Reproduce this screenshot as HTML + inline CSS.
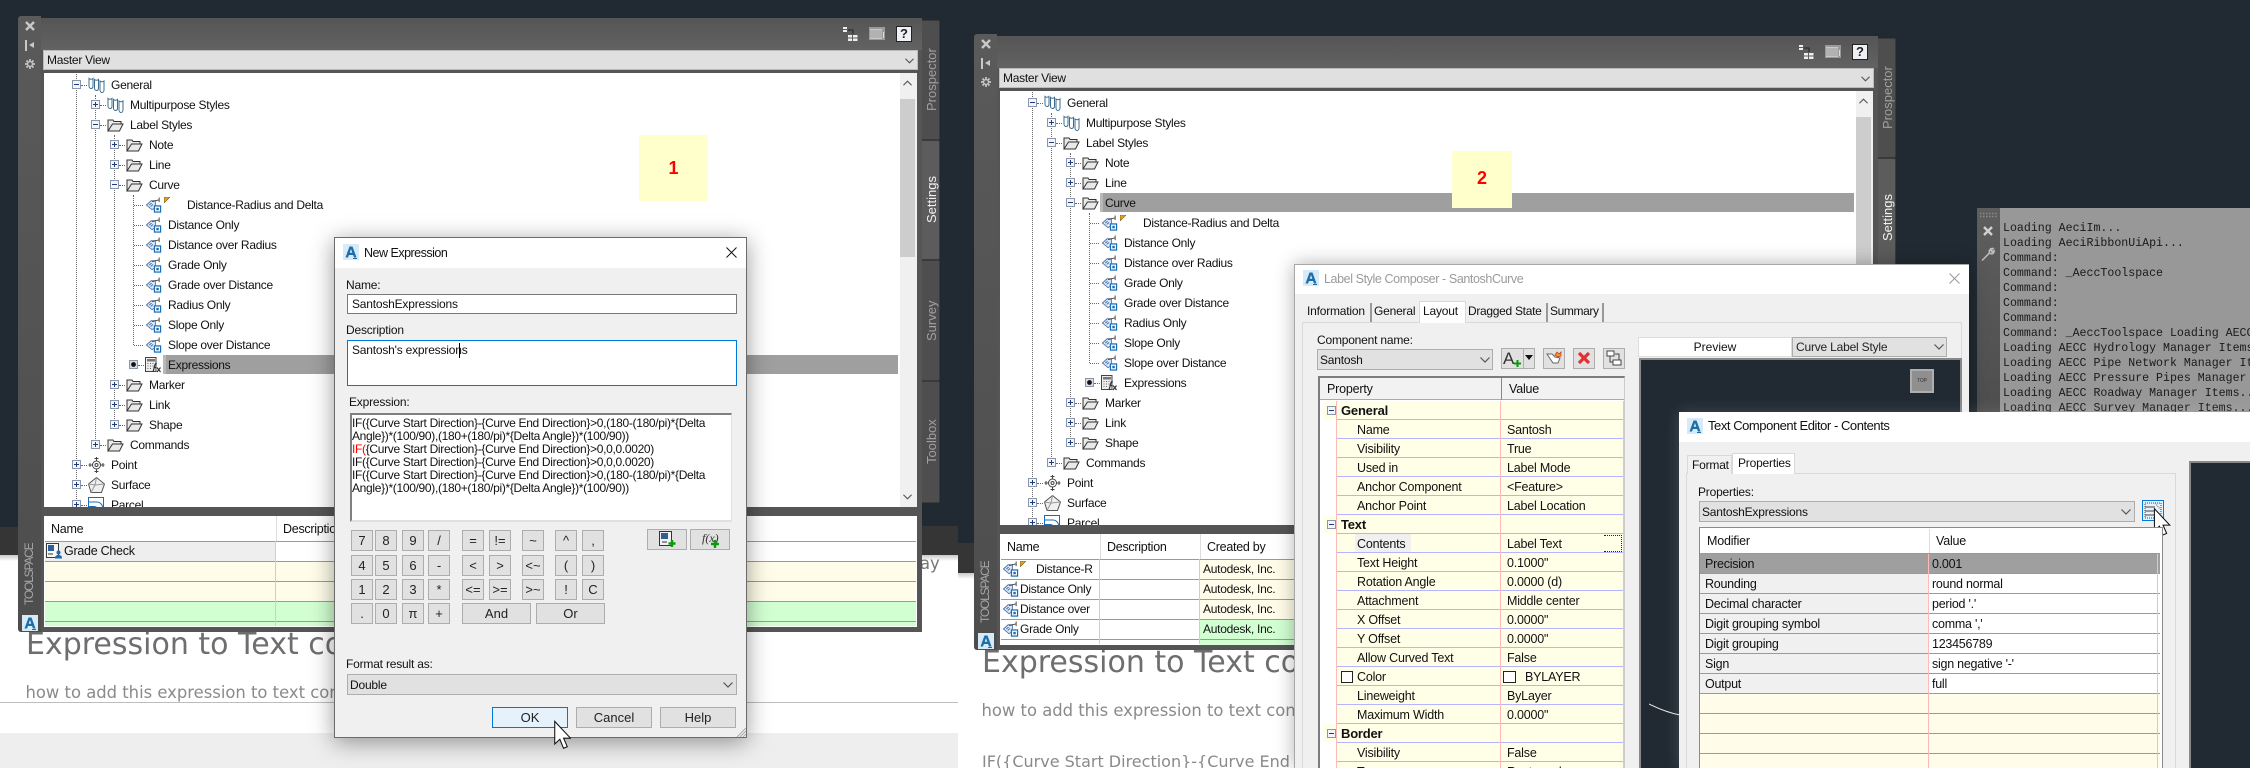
<!DOCTYPE html>
<html><head><meta charset="utf-8"><title>Expression to Text Component</title>
<style>
html,body{margin:0;padding:0;width:2250px;height:768px;overflow:hidden;background:#212a33}
body{position:relative;font-family:"Liberation Sans",sans-serif;font-size:12px;color:#111}
div,svg,span,p,b,i{position:absolute;margin:0;display:block}
p,.l{white-space:nowrap;letter-spacing:-.27px;line-height:16px}
.win{left:0;top:0;width:950px;height:640px}
.tree{left:0;top:0;width:917px;height:507px;overflow:hidden}
.r{left:0;height:0;width:0}
.r p{top:-8px}
.x{top:-5px;width:9px;height:9px}
.h{top:0;width:6px;height:0;border-top:1px dotted #666}
.f{top:-8px;width:17px;height:16px}
.vd{width:0;border-left:1px dotted #666}
.vt{writing-mode:vertical-rl;transform:rotate(180deg);text-align:center;white-space:nowrap;color:#a0a0a0;left:923px;width:18px;line-height:18px;font-size:13px}
.tab{left:920px;width:20px;background:#4e4e4e;border:1px solid #3a3a3a;border-left:0;border-radius:0 2px 2px 0;box-sizing:border-box}
.btn{background:#e1e1e1;border:1px solid #adadad;box-sizing:border-box;text-align:center;font-size:13px;color:#222;line-height:19px}
.lbl{white-space:nowrap;line-height:16px;letter-spacing:-.2px}
.ex{left:352px;white-space:nowrap;line-height:13px;letter-spacing:-.32px;font-size:12px}
.pr{height:18px;width:287px;left:1337px;border-bottom:1px solid #b4b4ff;line-height:18px;letter-spacing:-.2px;font-size:12.5px}
.pr span{white-space:nowrap;top:1px}
.k{left:20px}.v{left:170px}
.pr b{left:4px;top:1px;font-size:13px;letter-spacing:-.2px}
.gb{left:1327px;width:9px;height:9px}
.mr{left:1700px;width:460px;height:19px;border-bottom:1px solid #8c9db3;line-height:19px;letter-spacing:-.25px;font-size:12.5px;background:#fff}
.mr .a{left:0;top:0;width:228px;height:19px;background:#f0f0f0}
.mr span{white-space:nowrap;top:1px}
.cmd{left:2003px;font-family:"Liberation Mono",monospace;font-size:11.6px;line-height:15px;color:#1a1a1a;white-space:nowrap;margin-top:1px}
.hd{font-family:"DejaVu Sans",sans-serif;font-size:30px;line-height:44px;color:#6e6e6e;white-space:nowrap}
.sb{font-family:"DejaVu Sans",sans-serif;font-size:16.4px;line-height:22px;color:#8a8a8a;white-space:nowrap}
</style></head>
<body>
<svg width="0" height="0" style="left:0;top:0">
<defs>
<symbol id="pl" viewBox="0 0 9 9"><rect x=".5" y=".5" width="8" height="8" fill="#f3f5fa" stroke="#8b95a8"/><path d="M2 4.5H7M4.5 2V7" stroke="#1d3c7d" fill="none"/></symbol>
<symbol id="mi" viewBox="0 0 9 9"><rect x=".5" y=".5" width="8" height="8" fill="#f3f5fa" stroke="#8b95a8"/><path d="M2 4.5H7" stroke="#1d3c7d" fill="none"/></symbol>
<symbol id="dot" viewBox="0 0 9 9"><rect x=".5" y=".5" width="8" height="8" fill="#d8dde8" stroke="#8b95a8"/><circle cx="4.5" cy="4.5" r="2.4" fill="#111"/></symbol>
<symbol id="fo" viewBox="0 0 17 16"><path d="M1 14V3H6L7 4.5H14V7H5.5L1 14H12.5L16 7H5.5" fill="#e9e9e9" stroke="#333" stroke-width="1"/></symbol>
<symbol id="gen" viewBox="0 0 17 16"><g fill="#fff" stroke="#3b6c8f" stroke-width="1"><path d="M1 1.500c1 1 3 1 4 0V9c0 2-1 2.500-2 2.500S1 10.500 1 9z"/><path d="M6.500 2.500c1 1 3 1 4 0V11c0 2-1 2.500-2 2.500s-2-1-2-2.500z"/><path d="M12 4c1 1 3 1 4 0v9c0 1.500-1 2.500-2 2.500s-2-1-2-2.500z"/></g></symbol>
<symbol id="st" viewBox="0 0 17 17"><path d="M1 8.500 6 4H10.500V11L7 13.500z" fill="#dfe9f7" stroke="#56759f"/><path d="M4 8.500 6.500 6.500M5.500 10 8 8" stroke="#2e73c0"/><path d="M7 5 14.500 3M14.500 .5V5.500" stroke="#444" fill="none"/><rect x="9.500" y="9.500" width="6.500" height="6.500" fill="#fff" stroke="#1a6bb5" stroke-width="1.300"/><rect x="11.500" y="11.500" width="2.600" height="2.600" fill="#1a6bb5"/></symbol>
<symbol id="exi" viewBox="0 0 17 16"><rect x=".5" y=".5" width="10.500" height="14" fill="#eee" stroke="#444"/><rect x="2" y="2" width="8" height="2.500" fill="#777"/><path d="M2.500 6.500h1m1.500 0h1m1.500 0h1M2.500 9h1m1.500 0h1m1.500 0h1M2.500 11.500h1m1.500 0h1" stroke="#666"/><path d="M8 15 10 7.500c.3-1 1-1 1.800-.8M8.500 10.500H11.500M12 10.500l3.500 4.500M15.500 10.500 12 15" stroke="#333" stroke-width="1.200" fill="none"/></symbol>
<symbol id="pt" viewBox="0 0 17 16"><circle cx="8.500" cy="8" r="4" fill="#fff" stroke="#444"/><circle cx="8.500" cy="8" r="1.500" fill="none" stroke="#444"/><path d="M8.500 0V4M8.500 12V16M.5 8H4.500M12.500 8H16.500" stroke="#444"/><path d="M6.500 1.500h4M6.500 14.500h4M2 6v4M15 6v4" stroke="#444"/></symbol>
<symbol id="su" viewBox="0 0 17 16"><path d="M8.500 .5 16.500 7 13.500 15.500H3L.5 7z" fill="#efefef" stroke="#555"/><path d="M8.500 .5 7 8 .5 7M7 8 3 15.500M7 8 16.500 7" stroke="#999" fill="none"/></symbol>
<symbol id="pa" viewBox="0 0 17 16"><rect x=".5" y=".5" width="15" height="15" fill="#fff" stroke="#1a6bb5"/><path d="M.5 5H9C13 5 15.500 9 15.500 15.500M.5 9.500H6C9 9.500 11 12 11 15.500" stroke="#1a6bb5" fill="none"/></symbol>
<symbol id="A" viewBox="0 0 16 16"><rect width="16" height="16" fill="#d6ebf7"/><path fill-rule="evenodd" fill="#1d6ea8" d="M2.500 13.500 6.500 2.500H9.500L13.500 13.500H11L10.100 11H5.900L5 13.500ZM6.700 8.800H9.300L8 5Z"/><rect x="10" y="14" width="4" height="1" fill="#1d6ea8"/></symbol>
<symbol id="cv" viewBox="0 0 10 6"><path d="M.5 .5 5 5 9.500 .5" fill="none" stroke="#555" stroke-width="1.200"/></symbol>
<symbol id="cur" viewBox="0 0 16 27"><path d="M.7 .7V22L5.500 17.500 9 26 12.500 24.500 9 16.500H15.500Z" fill="#fff" stroke="#111" stroke-width="1"/></symbol>
<symbol id="gr" viewBox="0 0 10 10"><path d="M5 0V3M5 7V10M0 5H3M7 5H10M1.500 1.500 3 3M8.500 1.500 7 3M1.500 8.500 3 7M8.500 8.500 7 7" stroke="#c8c8c8" stroke-width="1.700"/><circle cx="5" cy="5" r="2.400" fill="none" stroke="#c8c8c8" stroke-width="1.200"/></symbol>
</defs>
</svg>

<!-- backdrop pages -->
<div style="left:0;top:527px;width:18px;height:28px;background:#353535"></div>
<div style="left:922px;top:526px;width:36px;height:29px;background:#353535"></div>
<div style="left:0;top:555px;width:958px;height:147px;background:#fff"></div>
<div style="left:0;top:555px;width:958px;height:6px;background:linear-gradient(#c8c8c8,#fff)"></div>
<div style="left:0;top:702px;width:958px;height:1px;background:#bdbdbd"></div>
<div style="left:0;top:703px;width:958px;height:30px;background:#fff"></div>
<div style="left:0;top:733px;width:958px;height:35px;background:#eee"></div>
<div style="left:26px;top:632px;height:70px;width:310px;overflow:hidden"><span class="hd" style="left:0;top:-9.400px">Expression to Text co</span></div>
<div style="left:25.500px;top:684px;width:312px;height:18px;overflow:hidden"><span class="sb" style="left:0;top:-1.700px">how to add this expression to text con</span></div>
<div class="sb" style="left:920px;top:553px;color:#777">ay</div>

<div style="left:958px;top:543px;width:17px;height:30px;background:#353535"></div>
<div style="left:958px;top:573px;width:340px;height:195px;background:#fff"></div>
<div style="left:958px;top:573px;width:340px;height:6px;background:linear-gradient(#c8c8c8,#fff)"></div>
<div style="left:982px;top:650px;height:70px;width:312px;overflow:hidden"><span class="hd" style="left:0;top:-9.400px">Expression to Text co</span></div>
<div class="sb" style="left:981.500px;top:700.300px">how to add this expression to text con</div>
<div class="sb" style="left:982px;top:750.500px;font-size:16px">IF({Curve Start Direction}-{Curve End</div>

<!-- WINDOW 1 -->
<div class="win">
 <div class="tab" style="top:20px;height:120px"></div>
 <div class="tab" style="top:140px;height:120px;background:#5c5c5c"></div>
 <div class="tab" style="top:260px;height:121px"></div>
 <div class="tab" style="top:381px;height:122px"></div>
 <div class="vt" style="top:20px;height:120px">Prospector</div>
 <div class="vt" style="top:140px;height:120px;color:#f2f2f2">Settings</div>
 <div class="vt" style="top:260px;height:121px">Survey</div>
 <div class="vt" style="top:381px;height:122px">Toolbox</div>
 <div style="left:18px;top:16px;width:23px;height:616px;background:linear-gradient(#5a5a5a,#4d4d4d);border-radius:3px 0 0 3px"></div>
 <div style="left:41px;top:18px;width:881px;height:614px;background:#555;border-radius:3px 3px 0 0"></div>
 <div style="left:41px;top:18px;width:881px;height:32px;background:linear-gradient(#555,#626262)"></div>
 <svg style="left:25px;top:21px;width:10px;height:10px" viewBox="0 0 10 10"><path d="M1 1 9 9M9 1 1 9" stroke="#c8c8c8" stroke-width="2.400"/></svg>
 <svg style="left:25px;top:40px;width:10px;height:11px" viewBox="0 0 10 11"><path d="M1 0V11" stroke="#c8c8c8" stroke-width="2"/><path d="M9 2V8L4 5Z" fill="#c8c8c8"/></svg>
 <svg style="left:25px;top:59px;width:10px;height:10px"><use href="#gr"/></svg>
 <div class="vt" style="left:20px;top:543px;height:62px;font-size:12px;letter-spacing:-1.200px;color:#a6a6a6">TOOLSPACE</div>
 <svg style="left:22px;top:615px;width:16px;height:16px"><use href="#A"/></svg>
 <svg style="left:842px;top:26px;width:16px;height:16px" viewBox="0 0 16 16"><rect x="1" y="1" width="4" height="2" fill="#eee"/><rect x="1" y="4" width="4" height="2" fill="#eee"/><path d="M6 4H11V8" stroke="#222" fill="none"/><rect x="6" y="9" width="4" height="2.500" fill="#eee"/><rect x="6" y="12.500" width="4" height="2.500" fill="#eee"/><rect x="11" y="9" width="4.500" height="2.500" fill="#eee"/><rect x="11" y="12.500" width="4.500" height="2.500" fill="#eee"/></svg>
 <svg style="left:869px;top:27px;width:16px;height:13px" viewBox="0 0 16 13"><rect width="16" height="13" fill="#9a9a9a"/><rect x="1" y="2" width="12" height="10" fill="#c8c8c8"/><path d="M1 4H13M1 6H13M1 8H13M1 10H13" stroke="#9c9c9c"/><rect x="14" y="5" width="1" height="6" fill="#ddd"/></svg>
 <div style="left:896px;top:26px;width:16px;height:16px;background:#eef0f5;border:1px solid #222;box-sizing:border-box;text-align:center;font-weight:bold;font-size:13px;line-height:14px;color:#222">?</div>
 <div style="left:43px;top:50px;width:875px;height:20px;background:#e0e0e0;border:1px solid #bbb;box-sizing:border-box"></div>
 <div class="l" style="left:47px;top:52px">Master View</div>
 <svg style="left:905px;top:58px;width:9px;height:6px"><use href="#cv"/></svg>
 <div style="left:44px;top:73px;width:873px;height:434px;background:#fff"></div>
 <div style="left:900px;top:73px;width:17px;height:434px;background:#f0f0f0"></div>
 <svg style="left:903px;top:80px;width:9px;height:6px;transform:rotate(180deg)"><use href="#cv"/></svg>
 <svg style="left:903px;top:494px;width:9px;height:6px"><use href="#cv"/></svg>
 <div style="left:900px;top:99px;width:15px;height:158px;background:#cdcdcd"></div>
 <div style="left:639px;top:135px;width:69px;height:66px;background:#ffc"></div>
 <div style="left:639px;top:155px;width:69px;text-align:center;font-size:18px;font-weight:bold;color:#f00;line-height:26px">1</div>
 <div style="left:163px;top:355px;width:735px;height:19px;background:#9f9f9f;border-left:3px solid #b8b8b8;box-sizing:border-box"></div>
 <div class="tree">
  <div class="vd" style="left:76px;top:74px;height:435px"></div>
  <div class="vd" style="left:95px;top:95px;height:350px"></div>
  <div class="vd" style="left:114px;top:135px;height:290px"></div>
  <div class="vd" style="left:133px;top:195px;height:150px"></div>
  <div class="r" style="top:85px"><svg class="x" style="left:72px"><use href="#mi"/></svg><i class="h" style="left:81px"></i><svg class="f" style="left:88px"><use href="#gen"/></svg><p style="left:111px">General</p></div>
  <div class="r" style="top:105px"><svg class="x" style="left:91px"><use href="#pl"/></svg><i class="h" style="left:100px"></i><svg class="f" style="left:107px"><use href="#gen"/></svg><p style="left:130px">Multipurpose Styles</p></div>
  <div class="r" style="top:125px"><svg class="x" style="left:91px"><use href="#mi"/></svg><i class="h" style="left:100px"></i><svg class="f" style="left:107px"><use href="#fo"/></svg><p style="left:130px">Label Styles</p></div>
  <div class="r" style="top:145px"><svg class="x" style="left:110px"><use href="#pl"/></svg><i class="h" style="left:119px"></i><svg class="f" style="left:126px"><use href="#fo"/></svg><p style="left:149px">Note</p></div>
  <div class="r" style="top:165px"><svg class="x" style="left:110px"><use href="#pl"/></svg><i class="h" style="left:119px"></i><svg class="f" style="left:126px"><use href="#fo"/></svg><p style="left:149px">Line</p></div>
  <div class="r" style="top:185px"><svg class="x" style="left:110px"><use href="#mi"/></svg><i class="h" style="left:119px"></i><svg class="f" style="left:126px"><use href="#fo"/></svg><p style="left:149px">Curve</p></div>
  <div class="r" style="top:205px"><i class="h" style="left:134px;width:9px"></i><svg class="f" style="left:145px"><use href="#st"/></svg><svg style="left:164px;top:-8px;width:6px;height:6px" viewBox="0 0 6 6"><path d="M0 0H6L0 6Z" fill="#e3a21a" stroke="#6b4d10" stroke-width=".6"/></svg><p style="left:187px">Distance-Radius and Delta</p></div>
  <div class="r" style="top:225px"><i class="h" style="left:134px;width:9px"></i><svg class="f" style="left:145px"><use href="#st"/></svg><p style="left:168px">Distance Only</p></div>
  <div class="r" style="top:245px"><i class="h" style="left:134px;width:9px"></i><svg class="f" style="left:145px"><use href="#st"/></svg><p style="left:168px">Distance over Radius</p></div>
  <div class="r" style="top:265px"><i class="h" style="left:134px;width:9px"></i><svg class="f" style="left:145px"><use href="#st"/></svg><p style="left:168px">Grade Only</p></div>
  <div class="r" style="top:285px"><i class="h" style="left:134px;width:9px"></i><svg class="f" style="left:145px"><use href="#st"/></svg><p style="left:168px">Grade over Distance</p></div>
  <div class="r" style="top:305px"><i class="h" style="left:134px;width:9px"></i><svg class="f" style="left:145px"><use href="#st"/></svg><p style="left:168px">Radius Only</p></div>
  <div class="r" style="top:325px"><i class="h" style="left:134px;width:9px"></i><svg class="f" style="left:145px"><use href="#st"/></svg><p style="left:168px">Slope Only</p></div>
  <div class="r" style="top:345px"><i class="h" style="left:134px;width:9px"></i><svg class="f" style="left:145px"><use href="#st"/></svg><p style="left:168px">Slope over Distance</p></div>
  <div class="r" style="top:365px"><svg class="x" style="left:129px"><use href="#dot"/></svg><i class="h" style="left:138px"></i><svg class="f" style="left:145px"><use href="#exi"/></svg><p style="left:168px">Expressions</p></div>
  <div class="r" style="top:385px"><svg class="x" style="left:110px"><use href="#pl"/></svg><i class="h" style="left:119px"></i><svg class="f" style="left:126px"><use href="#fo"/></svg><p style="left:149px">Marker</p></div>
  <div class="r" style="top:405px"><svg class="x" style="left:110px"><use href="#pl"/></svg><i class="h" style="left:119px"></i><svg class="f" style="left:126px"><use href="#fo"/></svg><p style="left:149px">Link</p></div>
  <div class="r" style="top:425px"><svg class="x" style="left:110px"><use href="#pl"/></svg><i class="h" style="left:119px"></i><svg class="f" style="left:126px"><use href="#fo"/></svg><p style="left:149px">Shape</p></div>
  <div class="r" style="top:445px"><svg class="x" style="left:91px"><use href="#pl"/></svg><i class="h" style="left:100px"></i><svg class="f" style="left:107px"><use href="#fo"/></svg><p style="left:130px">Commands</p></div>
  <div class="r" style="top:465px"><svg class="x" style="left:72px"><use href="#pl"/></svg><i class="h" style="left:81px"></i><svg class="f" style="left:88px"><use href="#pt"/></svg><p style="left:111px">Point</p></div>
  <div class="r" style="top:485px"><svg class="x" style="left:72px"><use href="#pl"/></svg><i class="h" style="left:81px"></i><svg class="f" style="left:88px"><use href="#su"/></svg><p style="left:111px">Surface</p></div>
  <div class="r" style="top:505px"><svg class="x" style="left:72px"><use href="#pl"/></svg><i class="h" style="left:81px"></i><svg class="f" style="left:88px"><use href="#pa"/></svg><p style="left:111px">Parcel</p></div>
 </div>
 <!-- list -->
 <div style="left:44px;top:516px;width:873px;height:111px;background:#fff"></div>
 <div style="left:276px;top:516px;width:1px;height:25px;background:#ddd"></div>
 <div class="l" style="left:51px;top:521px;font-size:12.500px">Name</div>
 <div class="l" style="left:283px;top:521px;font-size:12.500px">Description</div>
 <div style="left:45px;top:541px;width:871px;height:1px;background:#8c9db3"></div>
 <div style="left:45px;top:542px;width:230px;height:19px;background:#eee"></div>
 <div style="left:45px;top:561px;width:871px;height:1px;background:#8c9db3"></div>
 <div style="left:45px;top:562px;width:871px;height:19px;background:#fffde9"></div>
 <div style="left:45px;top:581px;width:871px;height:1px;background:#8c9db3"></div>
 <div style="left:45px;top:582px;width:871px;height:19px;background:#fffde9"></div>
 <div style="left:45px;top:601px;width:871px;height:1px;background:#8c9db3"></div>
 <div style="left:45px;top:602px;width:871px;height:19px;background:#d2ffd2"></div>
 <div style="left:45px;top:621px;width:871px;height:1px;background:#8c9db3"></div>
 <div style="left:45px;top:622px;width:871px;height:4px;background:#d2ffd2"></div>
 <div style="left:275px;top:541px;width:1px;height:85px;background:#ffb9b9"></div>
 <svg style="left:46px;top:543px;width:16px;height:16px" viewBox="0 0 16 16"><rect x=".5" y=".5" width="12" height="14" fill="#f6f6f6" stroke="#3a3a3a"/><rect x="2" y="2" width="6" height="6" fill="#2a5f9e"/><path d="M2 11H7" stroke="#333"/><path d="M9 15.500C9 13 10 12 12.500 12S16 13 16 15.500Z" fill="#1a6bb5"/><circle cx="12.500" cy="9.500" r="2" fill="#1a6bb5"/></svg>
 <div class="l" style="left:64px;top:543px;font-size:12.500px">Grade Check</div>
</div>

<!-- WINDOW 2 -->
<div class="win" style="left:956px;top:18px">
 <div class="tab" style="top:20px;height:120px"></div>
 <div class="tab" style="top:140px;height:120px;background:#5c5c5c"></div>
 <div class="tab" style="top:260px;height:121px"></div>
 <div class="tab" style="top:381px;height:122px"></div>
 <div class="vt" style="top:20px;height:120px">Prospector</div>
 <div class="vt" style="top:140px;height:120px;color:#f2f2f2">Settings</div>
 <div class="vt" style="top:260px;height:121px">Survey</div>
 <div class="vt" style="top:381px;height:122px">Toolbox</div>
 <div style="left:18px;top:16px;width:23px;height:616px;background:linear-gradient(#5a5a5a,#4d4d4d);border-radius:3px 0 0 3px"></div>
 <div style="left:41px;top:18px;width:881px;height:614px;background:#555;border-radius:3px 3px 0 0"></div>
 <div style="left:41px;top:18px;width:881px;height:32px;background:linear-gradient(#555,#626262)"></div>
 <svg style="left:25px;top:21px;width:10px;height:10px" viewBox="0 0 10 10"><path d="M1 1 9 9M9 1 1 9" stroke="#c8c8c8" stroke-width="2.400"/></svg>
 <svg style="left:25px;top:40px;width:10px;height:11px" viewBox="0 0 10 11"><path d="M1 0V11" stroke="#c8c8c8" stroke-width="2"/><path d="M9 2V8L4 5Z" fill="#c8c8c8"/></svg>
 <svg style="left:25px;top:59px;width:10px;height:10px"><use href="#gr"/></svg>
 <div class="vt" style="left:20px;top:543px;height:62px;font-size:12px;letter-spacing:-1.200px;color:#a6a6a6">TOOLSPACE</div>
 <svg style="left:22px;top:615px;width:16px;height:16px"><use href="#A"/></svg>
 <svg style="left:842px;top:26px;width:16px;height:16px" viewBox="0 0 16 16"><rect x="1" y="1" width="4" height="2" fill="#eee"/><rect x="1" y="4" width="4" height="2" fill="#eee"/><path d="M6 4H11V8" stroke="#222" fill="none"/><rect x="6" y="9" width="4" height="2.500" fill="#eee"/><rect x="6" y="12.500" width="4" height="2.500" fill="#eee"/><rect x="11" y="9" width="4.500" height="2.500" fill="#eee"/><rect x="11" y="12.500" width="4.500" height="2.500" fill="#eee"/></svg>
 <svg style="left:869px;top:27px;width:16px;height:13px" viewBox="0 0 16 13"><rect width="16" height="13" fill="#9a9a9a"/><rect x="1" y="2" width="12" height="10" fill="#c8c8c8"/><path d="M1 4H13M1 6H13M1 8H13M1 10H13" stroke="#9c9c9c"/><rect x="14" y="5" width="1" height="6" fill="#ddd"/></svg>
 <div style="left:896px;top:26px;width:16px;height:16px;background:#eef0f5;border:1px solid #222;box-sizing:border-box;text-align:center;font-weight:bold;font-size:13px;line-height:14px;color:#222">?</div>
 <div style="left:43px;top:50px;width:875px;height:20px;background:#e0e0e0;border:1px solid #bbb;box-sizing:border-box"></div>
 <div class="l" style="left:47px;top:52px">Master View</div>
 <svg style="left:905px;top:58px;width:9px;height:6px"><use href="#cv"/></svg>
 <div style="left:44px;top:73px;width:873px;height:434px;background:#fff"></div>
 <div style="left:900px;top:73px;width:17px;height:434px;background:#f0f0f0"></div>
 <svg style="left:903px;top:80px;width:9px;height:6px;transform:rotate(180deg)"><use href="#cv"/></svg>
 <div style="left:900px;top:99px;width:15px;height:158px;background:#cdcdcd"></div>
 <div style="left:144px;top:175px;width:754px;height:19px;background:#9f9f9f;border-left:3px solid #b8b8b8;box-sizing:border-box"></div>
 <div style="left:496px;top:133px;width:60px;height:57px;background:#ffc"></div>
 <div style="left:496px;top:147px;width:60px;text-align:center;font-size:18px;font-weight:bold;color:#f00;line-height:26px">2</div>
 <div class="tree">
  <div class="vd" style="left:76px;top:74px;height:435px"></div>
  <div class="vd" style="left:95px;top:95px;height:350px"></div>
  <div class="vd" style="left:114px;top:135px;height:290px"></div>
  <div class="vd" style="left:133px;top:195px;height:150px"></div>
  <div class="r" style="top:85px"><svg class="x" style="left:72px"><use href="#mi"/></svg><i class="h" style="left:81px"></i><svg class="f" style="left:88px"><use href="#gen"/></svg><p style="left:111px">General</p></div>
  <div class="r" style="top:105px"><svg class="x" style="left:91px"><use href="#pl"/></svg><i class="h" style="left:100px"></i><svg class="f" style="left:107px"><use href="#gen"/></svg><p style="left:130px">Multipurpose Styles</p></div>
  <div class="r" style="top:125px"><svg class="x" style="left:91px"><use href="#mi"/></svg><i class="h" style="left:100px"></i><svg class="f" style="left:107px"><use href="#fo"/></svg><p style="left:130px">Label Styles</p></div>
  <div class="r" style="top:145px"><svg class="x" style="left:110px"><use href="#pl"/></svg><i class="h" style="left:119px"></i><svg class="f" style="left:126px"><use href="#fo"/></svg><p style="left:149px">Note</p></div>
  <div class="r" style="top:165px"><svg class="x" style="left:110px"><use href="#pl"/></svg><i class="h" style="left:119px"></i><svg class="f" style="left:126px"><use href="#fo"/></svg><p style="left:149px">Line</p></div>
  <div class="r" style="top:185px"><svg class="x" style="left:110px"><use href="#mi"/></svg><i class="h" style="left:119px"></i><svg class="f" style="left:126px"><use href="#fo"/></svg><p style="left:149px">Curve</p></div>
  <div class="r" style="top:205px"><i class="h" style="left:134px;width:9px"></i><svg class="f" style="left:145px"><use href="#st"/></svg><svg style="left:164px;top:-8px;width:6px;height:6px" viewBox="0 0 6 6"><path d="M0 0H6L0 6Z" fill="#e3a21a" stroke="#6b4d10" stroke-width=".6"/></svg><p style="left:187px">Distance-Radius and Delta</p></div>
  <div class="r" style="top:225px"><i class="h" style="left:134px;width:9px"></i><svg class="f" style="left:145px"><use href="#st"/></svg><p style="left:168px">Distance Only</p></div>
  <div class="r" style="top:245px"><i class="h" style="left:134px;width:9px"></i><svg class="f" style="left:145px"><use href="#st"/></svg><p style="left:168px">Distance over Radius</p></div>
  <div class="r" style="top:265px"><i class="h" style="left:134px;width:9px"></i><svg class="f" style="left:145px"><use href="#st"/></svg><p style="left:168px">Grade Only</p></div>
  <div class="r" style="top:285px"><i class="h" style="left:134px;width:9px"></i><svg class="f" style="left:145px"><use href="#st"/></svg><p style="left:168px">Grade over Distance</p></div>
  <div class="r" style="top:305px"><i class="h" style="left:134px;width:9px"></i><svg class="f" style="left:145px"><use href="#st"/></svg><p style="left:168px">Radius Only</p></div>
  <div class="r" style="top:325px"><i class="h" style="left:134px;width:9px"></i><svg class="f" style="left:145px"><use href="#st"/></svg><p style="left:168px">Slope Only</p></div>
  <div class="r" style="top:345px"><i class="h" style="left:134px;width:9px"></i><svg class="f" style="left:145px"><use href="#st"/></svg><p style="left:168px">Slope over Distance</p></div>
  <div class="r" style="top:365px"><svg class="x" style="left:129px"><use href="#dot"/></svg><i class="h" style="left:138px"></i><svg class="f" style="left:145px"><use href="#exi"/></svg><p style="left:168px">Expressions</p></div>
  <div class="r" style="top:385px"><svg class="x" style="left:110px"><use href="#pl"/></svg><i class="h" style="left:119px"></i><svg class="f" style="left:126px"><use href="#fo"/></svg><p style="left:149px">Marker</p></div>
  <div class="r" style="top:405px"><svg class="x" style="left:110px"><use href="#pl"/></svg><i class="h" style="left:119px"></i><svg class="f" style="left:126px"><use href="#fo"/></svg><p style="left:149px">Link</p></div>
  <div class="r" style="top:425px"><svg class="x" style="left:110px"><use href="#pl"/></svg><i class="h" style="left:119px"></i><svg class="f" style="left:126px"><use href="#fo"/></svg><p style="left:149px">Shape</p></div>
  <div class="r" style="top:445px"><svg class="x" style="left:91px"><use href="#pl"/></svg><i class="h" style="left:100px"></i><svg class="f" style="left:107px"><use href="#fo"/></svg><p style="left:130px">Commands</p></div>
  <div class="r" style="top:465px"><svg class="x" style="left:72px"><use href="#pl"/></svg><i class="h" style="left:81px"></i><svg class="f" style="left:88px"><use href="#pt"/></svg><p style="left:111px">Point</p></div>
  <div class="r" style="top:485px"><svg class="x" style="left:72px"><use href="#pl"/></svg><i class="h" style="left:81px"></i><svg class="f" style="left:88px"><use href="#su"/></svg><p style="left:111px">Surface</p></div>
  <div class="r" style="top:505px"><svg class="x" style="left:72px"><use href="#pl"/></svg><i class="h" style="left:81px"></i><svg class="f" style="left:88px"><use href="#pa"/></svg><p style="left:111px">Parcel</p></div>
 </div>
 <!-- list -->
 <div style="left:44px;top:516px;width:873px;height:111px;background:#fff"></div>
 <div style="left:144px;top:516px;width:1px;height:25px;background:#ddd"></div>
 <div style="left:244px;top:516px;width:1px;height:25px;background:#ddd"></div>
 <div class="l" style="left:51px;top:521px;font-size:12.500px">Name</div>
 <div class="l" style="left:151px;top:521px;font-size:12.500px">Description</div>
 <div class="l" style="left:251px;top:521px;font-size:12.500px">Created by</div>
 <div style="left:244px;top:541px;width:673px;height:60px;background:#fffde9"></div>
 <div style="left:244px;top:601px;width:673px;height:26px;background:#d2ffd2"></div>
 <div style="left:45px;top:541px;width:871px;height:1px;background:#8c9db3"></div>
 <div style="left:45px;top:561px;width:871px;height:1px;background:#8c9db3"></div>
 <div style="left:45px;top:581px;width:871px;height:1px;background:#8c9db3"></div>
 <div style="left:45px;top:601px;width:871px;height:1px;background:#8c9db3"></div>
 <div style="left:45px;top:621px;width:871px;height:1px;background:#8c9db3"></div>
 <div style="left:143px;top:541px;width:1px;height:85px;background:#ffb9b9"></div>
 <div style="left:243px;top:541px;width:1px;height:85px;background:#ffb9b9"></div>
 <svg class="f" style="left:46px;top:543px"><use href="#st"/></svg>
 <svg style="left:64px;top:543px;width:6px;height:6px" viewBox="0 0 6 6"><path d="M0 0H6L0 6Z" fill="#e3a21a" stroke="#6b4d10" stroke-width=".6"/></svg>
 <div class="l" style="left:80px;top:543px">Distance-R</div>
 <svg class="f" style="left:46px;top:563px"><use href="#st"/></svg><div class="l" style="left:64px;top:563px">Distance Only</div>
 <svg class="f" style="left:46px;top:583px"><use href="#st"/></svg><div class="l" style="left:64px;top:583px">Distance over</div>
 <svg class="f" style="left:46px;top:603px"><use href="#st"/></svg><div class="l" style="left:64px;top:603px">Grade Only</div>
 <div class="l" style="left:247px;top:543px">Autodesk, Inc.</div>
 <div class="l" style="left:247px;top:563px">Autodesk, Inc.</div>
 <div class="l" style="left:247px;top:583px">Autodesk, Inc.</div>
 <div class="l" style="left:247px;top:603px">Autodesk, Inc.</div>
</div>

<!-- NEW EXPRESSION DIALOG -->
<div style="left:334px;top:237px;width:413px;height:501px;background:#f0f0f0;border:1px solid #6b6b6b;box-sizing:border-box;box-shadow:0 4px 22px rgba(0,0,0,.4)"></div>
<div style="left:335px;top:238px;width:411px;height:30px;background:#fff"></div>
<svg style="left:343px;top:244px;width:16px;height:16px"><use href="#A"/></svg>
<div class="lbl" style="left:364px;top:245px;font-size:12.500px;letter-spacing:-.5px">New Expression</div>
<svg style="left:726px;top:247px;width:11px;height:11px" viewBox="0 0 11 11"><path d="M.5 .5 10.500 10.500M10.500 .5 .5 10.500" stroke="#111"/></svg>
<div class="lbl" style="left:346px;top:277px">Name:</div>
<div style="left:347px;top:294px;width:390px;height:20px;background:#fff;border:1px solid #7a7a7a;box-sizing:border-box"></div>
<div class="lbl" style="left:352px;top:296px">SantoshExpressions</div>
<div class="lbl" style="left:346px;top:322px">Description</div>
<div style="left:347px;top:340px;width:390px;height:46px;background:#fff;border:1px solid #0078d7;box-sizing:border-box"></div>
<div class="lbl" style="left:352px;top:342px">Santosh's expressions</div>
<div style="left:459px;top:343px;width:1px;height:15px;background:#000"></div>
<div class="lbl" style="left:349px;top:394px">Expression:</div>
<div style="left:350px;top:413px;width:382px;height:109px;background:#fff;border:2px solid #808080;border-right:1px solid #e0e0e0;border-bottom:2px solid #e0e0e0;box-sizing:border-box"></div>
<div class="ex" style="top:417px">IF({Curve Start Direction}-{Curve End Direction}&gt;0,(180-(180/pi)*{Delta</div>
<div class="ex" style="top:430px">Angle})*(100/90),(180+(180/pi)*{Delta Angle})*(100/90))</div>
<div class="ex" style="top:443px"><span style="position:static;display:inline;color:#f00">IF(</span>{Curve Start Direction}-{Curve End Direction}&gt;0,0,0.0020)</div>
<div class="ex" style="top:456px">IF({Curve Start Direction}-{Curve End Direction}&gt;0,0,0.0020)</div>
<div class="ex" style="top:469px">IF({Curve Start Direction}-{Curve End Direction}&gt;0,(180-(180/pi)*{Delta</div>
<div class="ex" style="top:482px">Angle})*(100/90),(180+(180/pi)*{Delta Angle})*(100/90))</div>

<div class="btn" style="left:351px;top:530px;width:22px;height:21px">7</div>
<div class="btn" style="left:375px;top:530px;width:22px;height:21px">8</div>
<div class="btn" style="left:402px;top:530px;width:22px;height:21px">9</div>
<div class="btn" style="left:428px;top:530px;width:22px;height:21px">/</div>
<div class="btn" style="left:462px;top:530px;width:22px;height:21px">=</div>
<div class="btn" style="left:489px;top:530px;width:22px;height:21px">!=</div>
<div class="btn" style="left:522px;top:530px;width:22px;height:21px">~</div>
<div class="btn" style="left:555px;top:530px;width:22px;height:21px">^</div>
<div class="btn" style="left:582px;top:530px;width:22px;height:21px">,</div>
<div class="btn" style="left:351px;top:555px;width:22px;height:21px">4</div>
<div class="btn" style="left:375px;top:555px;width:22px;height:21px">5</div>
<div class="btn" style="left:402px;top:555px;width:22px;height:21px">6</div>
<div class="btn" style="left:428px;top:555px;width:22px;height:21px">-</div>
<div class="btn" style="left:462px;top:555px;width:22px;height:21px">&lt;</div>
<div class="btn" style="left:489px;top:555px;width:22px;height:21px">&gt;</div>
<div class="btn" style="left:522px;top:555px;width:22px;height:21px">&lt;~</div>
<div class="btn" style="left:555px;top:555px;width:22px;height:21px">(</div>
<div class="btn" style="left:582px;top:555px;width:22px;height:21px">)</div>
<div class="btn" style="left:351px;top:579px;width:22px;height:21px">1</div>
<div class="btn" style="left:375px;top:579px;width:22px;height:21px">2</div>
<div class="btn" style="left:402px;top:579px;width:22px;height:21px">3</div>
<div class="btn" style="left:428px;top:579px;width:22px;height:21px">*</div>
<div class="btn" style="left:462px;top:579px;width:22px;height:21px">&lt;=</div>
<div class="btn" style="left:489px;top:579px;width:22px;height:21px">&gt;=</div>
<div class="btn" style="left:522px;top:579px;width:22px;height:21px">&gt;~</div>
<div class="btn" style="left:555px;top:579px;width:22px;height:21px">!</div>
<div class="btn" style="left:582px;top:579px;width:22px;height:21px">C</div>
<div class="btn" style="left:351px;top:603px;width:22px;height:21px">.</div>
<div class="btn" style="left:375px;top:603px;width:22px;height:21px">0</div>
<div class="btn" style="left:402px;top:603px;width:22px;height:21px">π</div>
<div class="btn" style="left:428px;top:603px;width:22px;height:21px">+</div>
<div class="btn" style="left:462px;top:603px;width:69px;height:21px">And</div>
<div class="btn" style="left:536px;top:603px;width:69px;height:21px">Or</div>
<div class="btn" style="left:647px;top:529px;width:40px;height:21px"></div>
<svg style="left:659px;top:531px;width:17px;height:16px" viewBox="0 0 17 16"><rect x=".5" y=".5" width="12" height="14" fill="#f2f2f2" stroke="#333"/><rect x="2" y="2" width="7" height="6" fill="#2f5f96"/><path d="M3 11H8" stroke="#333"/><path d="M13 9V16M9.500 12.500H16.500" stroke="#0a9a0a" stroke-width="2.400"/></svg>
<div class="btn" style="left:690px;top:529px;width:40px;height:21px"></div>
<div style="left:702px;top:529px;font:italic 12px/18px 'Liberation Serif',serif;color:#333">f(x)</div>
<svg style="left:711px;top:540px;width:8px;height:8px" viewBox="0 0 8 8"><path d="M4 0V8M0 4H8" stroke="#0a9a0a" stroke-width="2.400"/></svg>

<div class="lbl" style="left:346px;top:656px">Format result as:</div>
<div class="btn" style="left:347px;top:674px;width:390px;height:21px"></div>
<div class="lbl" style="left:350px;top:677px">Double</div>
<svg style="left:723px;top:682px;width:10px;height:6px"><use href="#cv"/></svg>
<div class="btn" style="left:492px;top:707px;width:76px;height:21px;background:#e5f1fb;border-color:#0078d7">OK</div>
<div class="btn" style="left:576px;top:707px;width:76px;height:21px">Cancel</div>
<div class="btn" style="left:660px;top:707px;width:76px;height:21px">Help</div>
<svg style="left:736px;top:727px;width:10px;height:10px" viewBox="0 0 10 10"><path d="M10 1 1 10M10 4 4 10M10 7 7 10" stroke="#aaa"/></svg>
<svg style="left:554px;top:720px;width:17px;height:30px"><use href="#cur"/></svg>

<!-- COMMAND WINDOW -->
<div style="left:1977px;top:208px;width:23px;height:204px;background:linear-gradient(#5e5e5e,#4e4e4e)"></div>
<div style="left:2000px;top:208px;width:250px;height:204px;background:#989898;overflow:hidden"></div>
<svg style="left:1980px;top:212px;width:17px;height:6px" viewBox="0 0 17 6"><path d="M0 1.500H17M0 4.500H17" stroke="#8a8a8a" stroke-dasharray="1.500 1.500" stroke-width="1.500"/></svg>
<svg style="left:1983px;top:226px;width:10px;height:10px" viewBox="0 0 10 10"><path d="M1 1 9 9M9 1 1 9" stroke="#d0d0d0" stroke-width="2.400"/></svg>
<svg style="left:1981px;top:247px;width:14px;height:14px" viewBox="0 0 14 14"><path d="M1 13.500 8.500 6M8.500 6C7.500 3.500 9.500 1 12 1.500L10 3.500 11 5 13 3.500C13.500 6 11 8 8.500 6" stroke="#bdbdbd" stroke-width="1.500" fill="none"/></svg>
<div class="cmd" style="top:220px">Loading AeciIm...</div>
<div class="cmd" style="top:235px">Loading AeciRibbonUiApi...</div>
<div class="cmd" style="top:250px">Command:</div>
<div class="cmd" style="top:265px">Command: _AeccToolspace</div>
<div class="cmd" style="top:280px">Command:</div>
<div class="cmd" style="top:295px">Command:</div>
<div class="cmd" style="top:310px">Command:</div>
<div class="cmd" style="top:325px">Command: _AeccToolspace Loading AECC Base...</div>
<div class="cmd" style="top:340px">Loading AECC Hydrology Manager Items...</div>
<div class="cmd" style="top:355px">Loading AECC Pipe Network Manager Items...</div>
<div class="cmd" style="top:370px">Loading AECC Pressure Pipes Manager Items...</div>
<div class="cmd" style="top:385px">Loading AECC Roadway Manager Items...</div>
<div class="cmd" style="top:400px">Loading AECC Survey Manager Items...</div>

<!-- LABEL STYLE COMPOSER -->
<div style="left:1294px;top:264px;width:675px;height:504px;background:#f0f0f0;box-shadow:0 0 18px rgba(0,0,0,.3);border-left:1px solid #a8a8a8;border-top:1px solid #a8a8a8;box-sizing:border-box"></div>
<div style="left:1295px;top:265px;width:674px;height:29px;background:#fff"></div>
<svg style="left:1303px;top:270px;width:16px;height:16px"><use href="#A"/></svg>
<div class="lbl" style="left:1324px;top:271px;font-size:12.500px;letter-spacing:-.4px;color:#9a9a9a">Label Style Composer - SantoshCurve</div>
<svg style="left:1949px;top:273px;width:11px;height:11px" viewBox="0 0 11 11"><path d="M.5 .5 10.500 10.500M10.500 .5 .5 10.500" stroke="#999"/></svg>
<div style="left:1302px;top:322px;width:660px;height:446px;background:#f0f0f0;border:1px solid #d9d9d9;border-bottom:0;box-sizing:border-box"></div>
<div style="left:1304px;top:303px;width:66px;height:19px;background:#efefef;border-right:2px solid #999"></div>
<div style="left:1372px;top:303px;width:45px;height:19px;background:#efefef"></div>
<div style="left:1419px;top:301px;width:47px;height:22px;background:#fff;border:1px solid #d9d9d9;border-bottom:0;box-sizing:border-box"></div>
<div style="left:1467px;top:303px;width:79px;height:19px;background:#efefef;border-right:2px solid #999"></div>
<div style="left:1548px;top:303px;width:54px;height:19px;background:#efefef;border-right:2px solid #999"></div>
<div class="lbl" style="left:1307px;top:303px">Information</div>
<div class="lbl" style="left:1374px;top:303px">General</div>
<div class="lbl" style="left:1423px;top:303px">Layout</div>
<div class="lbl" style="left:1468px;top:303px;letter-spacing:-.3px">Dragged State</div>
<div class="lbl" style="left:1550px;top:303px;letter-spacing:-.4px">Summary</div>
<div class="lbl" style="left:1317px;top:332px">Component name:</div>
<div class="btn" style="left:1317px;top:349px;width:176px;height:21px"></div>
<div class="lbl" style="left:1320px;top:352px">Santosh</div>
<svg style="left:1480px;top:357px;width:10px;height:6px"><use href="#cv"/></svg>
<div class="btn" style="left:1501px;top:348px;width:34px;height:21px"></div>
<div style="left:1523px;top:349px;width:1px;height:19px;background:#adadad"></div>
<div style="left:1503px;top:348px;font-size:17px;line-height:21px;color:#333">A</div>
<svg style="left:1514px;top:360px;width:7px;height:7px" viewBox="0 0 7 7"><path d="M3.500 0V7M0 3.500H7" stroke="#0a9a0a" stroke-width="2"/></svg>
<svg style="left:1525px;top:355px;width:8px;height:5px" viewBox="0 0 8 5"><path d="M0 0H8L4 5Z" fill="#111"/></svg>
<div class="btn" style="left:1543px;top:348px;width:22px;height:21px"></div>
<svg style="left:1546px;top:350px;width:17px;height:17px" viewBox="0 0 17 17"><path d="M1 4 7 13H12L14 8 9 7 6 4Z" fill="#fff" stroke="#666"/><path d="M9 5 11 2 13 4 15 2 15 6 12 7Z" fill="#e8a020" stroke="#c8301a" stroke-width=".7"/></svg>
<div class="btn" style="left:1573px;top:348px;width:22px;height:21px"></div>
<svg style="left:1577px;top:351px;width:14px;height:14px" viewBox="0 0 14 14"><path d="M2 2 12 12M12 2 2 12" stroke="#e33030" stroke-width="3.200"/></svg>
<div class="btn" style="left:1603px;top:348px;width:22px;height:21px"></div>
<svg style="left:1606px;top:350px;width:17px;height:16px" viewBox="0 0 17 16"><rect x="1" y="1" width="7" height="5" fill="#fff" stroke="#444"/><rect x="7" y="10" width="8" height="5" fill="#fff" stroke="#444"/><path d="M4 6V12H7M9 4H13V10" stroke="#444" fill="none"/></svg>

<div style="left:1318px;top:376px;width:307px;height:392px;background:#fff;border:2px solid #7d7d7d;border-right:1px solid #ccc;border-bottom:0;box-sizing:border-box"></div>
<div style="left:1320px;top:378px;width:304px;height:22px;background:#f2f2f2;border-bottom:1px solid #aaa;box-sizing:border-box"></div>
<div style="left:1501px;top:378px;width:1px;height:22px;background:#888"></div>
<div class="lbl" style="left:1327px;top:381px;font-size:12.500px">Property</div>
<div class="lbl" style="left:1509px;top:381px;font-size:12.500px">Value</div>
<div style="left:1337px;top:401px;width:287px;height:367px;background:#ffffe8"></div>
<div style="left:1323px;top:401px;width:14px;height:18px;background:#ffffe8"></div>
<div style="left:1323px;top:515px;width:14px;height:18px;background:#ffffe8"></div>
<div style="left:1323px;top:724px;width:14px;height:18px;background:#ffffe8"></div>
<div class="pr" style="top:401px"><b>General</b></div>
<div class="pr" style="top:420px"><span class="k">Name</span><span class="v">Santosh</span></div>
<div class="pr" style="top:439px"><span class="k">Visibility</span><span class="v">True</span></div>
<div class="pr" style="top:458px"><span class="k">Used in</span><span class="v">Label Mode</span></div>
<div class="pr" style="top:477px"><span class="k">Anchor Component</span><span class="v">&lt;Feature&gt;</span></div>
<div class="pr" style="top:496px"><span class="k">Anchor Point</span><span class="v">Label Location</span></div>
<div class="pr" style="top:515px"><b>Text</b></div>
<div class="pr" style="top:534px"><div style="left:18px;top:0;width:56px;height:18px;background:#f0f0f0"></div><span class="k">Contents</span><span class="v">Label Text</span></div>
<div class="pr" style="top:553px"><span class="k">Text Height</span><span class="v">0.1000"</span></div>
<div class="pr" style="top:572px"><span class="k">Rotation Angle</span><span class="v">0.0000 (d)</span></div>
<div class="pr" style="top:591px"><span class="k">Attachment</span><span class="v">Middle center</span></div>
<div class="pr" style="top:610px"><span class="k">X Offset</span><span class="v">0.0000"</span></div>
<div class="pr" style="top:629px"><span class="k">Y Offset</span><span class="v">0.0000"</span></div>
<div class="pr" style="top:648px"><span class="k">Allow Curved Text</span><span class="v">False</span></div>
<div class="pr" style="top:667px"><span class="k">Color</span><span class="v" style="left:188px">BYLAYER</span></div>
<div class="pr" style="top:686px"><span class="k">Lineweight</span><span class="v">ByLayer</span></div>
<div class="pr" style="top:705px"><span class="k">Maximum Width</span><span class="v">0.0000"</span></div>
<div class="pr" style="top:724px"><b>Border</b></div>
<div class="pr" style="top:743px"><span class="k">Visibility</span><span class="v">False</span></div>
<div class="pr" style="top:762px;height:6px;overflow:hidden"><span class="k">Type</span><span class="v">Rectangular</span></div>
<svg class="gb" style="top:406px"><use href="#mi"/></svg>
<svg class="gb" style="top:520px"><use href="#mi"/></svg>
<svg class="gb" style="top:729px"><use href="#mi"/></svg>
<div style="left:1336px;top:401px;width:1px;height:367px;background:#ffb9b9"></div>
<div style="left:1500px;top:401px;width:1px;height:367px;background:#ffb9b9"></div>
<div style="left:1623px;top:401px;width:1px;height:367px;background:#ffb9b9"></div>
<div style="left:1604px;top:535px;width:18px;height:17px;border:1px dotted #222;border-left:0;box-sizing:border-box"></div>
<div style="left:1341px;top:671px;width:12px;height:12px;background:#fff;border:1px solid #222;box-sizing:border-box"></div>
<div style="left:1503px;top:671px;width:13px;height:12px;background:#fff;border:1px solid #222;box-sizing:border-box"></div>

<!-- preview -->
<div style="left:1638px;top:337px;width:154px;height:20px;background:#fff;border:1px solid #ddd;box-sizing:border-box;text-align:center;line-height:18px;font-size:12px">Preview</div>
<div class="btn" style="left:1792px;top:337px;width:155px;height:20px;text-align:left;padding-left:3px;font-size:12px;letter-spacing:-.2px">Curve Label Style</div>
<svg style="left:1934px;top:344px;width:10px;height:6px"><use href="#cv"/></svg>
<div style="left:1639px;top:358px;width:323px;height:410px;background:#212a33;border:2px solid #888;border-bottom:0;box-sizing:border-box"></div>
<div style="left:1910px;top:369px;width:24px;height:24px;background:#8f8f8f;border:2px solid #aeaeae;box-sizing:border-box;text-align:center;font-size:5px;line-height:20px;color:#333">TOP</div>
<svg style="left:1649px;top:700px;width:32px;height:18px" viewBox="0 0 32 18"><path d="M0 4C10 9 20 13 31 15" stroke="#e8e8e8" fill="none"/></svg>

<!-- TEXT COMPONENT EDITOR -->
<div style="left:1679px;top:412px;width:571px;height:356px;background:#f0f0f0;box-shadow:0 0 14px rgba(255,255,255,.15)"></div>
<div style="left:1679px;top:412px;width:571px;height:30px;background:#fff"></div>
<svg style="left:1687px;top:418px;width:16px;height:16px"><use href="#A"/></svg>
<div class="lbl" style="left:1708px;top:418px;font-size:13px;letter-spacing:-.45px">Text Component Editor - Contents</div>
<div style="left:2189px;top:461px;width:61px;height:307px;background:#212a33;border:2px solid #888;border-right:0;border-bottom:0;box-sizing:border-box"></div>
<div style="left:1686px;top:473px;width:490px;height:295px;background:#f0f0f0;border:1px solid #d9d9d9;border-bottom:0;box-sizing:border-box"></div>
<div style="left:1687px;top:455px;width:45px;height:19px;background:#f0f0f0;border:1px solid #d9d9d9;border-bottom:0;box-sizing:border-box"></div>
<div style="left:1732px;top:453px;width:63px;height:21px;background:#fff;border:1px solid #d9d9d9;border-bottom:0;box-sizing:border-box"></div>
<div class="lbl" style="left:1692px;top:457px">Format</div>
<div class="lbl" style="left:1738px;top:455px">Properties</div>
<div class="lbl" style="left:1698px;top:484px">Properties:</div>
<div class="btn" style="left:1699px;top:501px;width:436px;height:21px"></div>
<div class="lbl" style="left:1702px;top:504px">SantoshExpressions</div>
<svg style="left:2121px;top:509px;width:10px;height:6px"><use href="#cv"/></svg>
<div style="left:2142px;top:500px;width:22px;height:21px;background:#e5f1fb;border:1px solid #0078d7;box-sizing:border-box"></div>
<svg style="left:2144px;top:502px;width:18px;height:17px" viewBox="0 0 18 17"><rect x="1" y="1" width="16" height="15" fill="none" stroke="#444" stroke-dasharray="1 1"/><path d="M1 5H11M1 9H11M1 13H11" stroke="#444"/><path d="M11 1 17 8" stroke="#666" stroke-dasharray="1 1"/></svg>
<svg style="left:2153px;top:508px;width:18px;height:28px"><use href="#cur"/></svg>
<div style="left:1699px;top:527px;width:464px;height:241px;background:#fff;border:1px solid #8a8a8a;border-bottom:0;box-sizing:border-box"></div>
<div style="left:1929px;top:529px;width:1px;height:24px;background:#ddd"></div>
<div class="lbl" style="left:1707px;top:533px;font-size:12.500px">Modifier</div>
<div class="lbl" style="left:1936px;top:533px;font-size:12.500px">Value</div>
<div style="left:1700px;top:553px;width:460px;height:1px;background:#8c9db3"></div>
<div class="mr" style="top:554px;background:#9f9f9f"><div class="a" style="background:#9f9f9f"></div><span style="left:5px">Precision</span><span style="left:232px">0.001</span></div>
<div class="mr" style="top:574px"><div class="a"></div><span style="left:5px">Rounding</span><span style="left:232px">round normal</span></div>
<div class="mr" style="top:594px"><div class="a"></div><span style="left:5px">Decimal character</span><span style="left:232px">period '.'</span></div>
<div class="mr" style="top:614px"><div class="a"></div><span style="left:5px">Digit grouping symbol</span><span style="left:232px">comma ','</span></div>
<div class="mr" style="top:634px"><div class="a"></div><span style="left:5px">Digit grouping</span><span style="left:232px">123456789</span></div>
<div class="mr" style="top:654px"><div class="a"></div><span style="left:5px">Sign</span><span style="left:232px">sign negative '-'</span></div>
<div class="mr" style="top:674px"><div class="a"></div><span style="left:5px">Output</span><span style="left:232px">full</span></div>
<div class="mr" style="top:694px;background:#fffde9"></div>
<div class="mr" style="top:714px;background:#fffde9"></div>
<div class="mr" style="top:734px;background:#fffde9"></div>
<div class="mr" style="top:754px;height:14px;border:0;background:#fffde9"></div>
<div style="left:1928px;top:554px;width:1px;height:214px;background:#ffb9b9"></div>
<div style="left:2157px;top:554px;width:1px;height:214px;background:#ffb9b9"></div>
</body></html>
